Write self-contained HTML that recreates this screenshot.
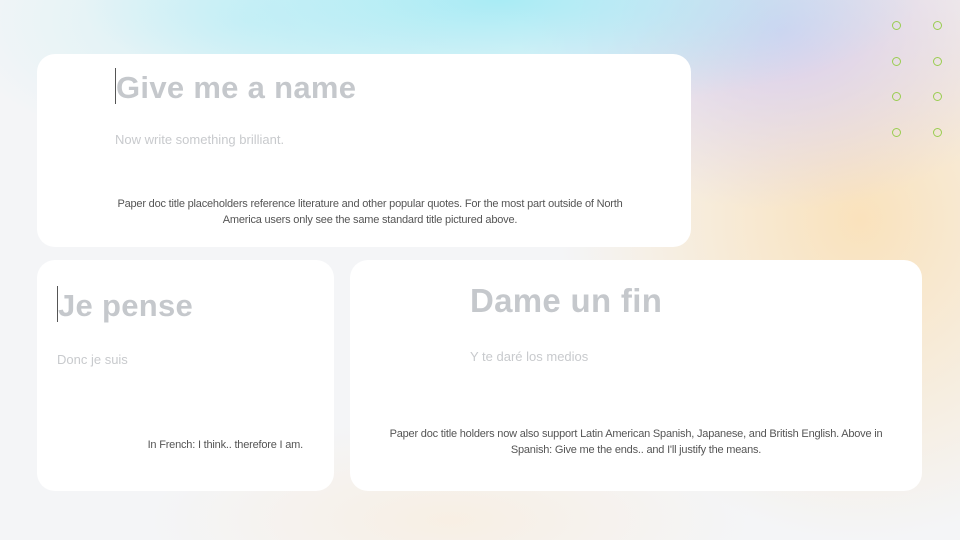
<!DOCTYPE html>
<html><head><style>
body{margin:0;width:960px;height:540px;overflow:hidden;font-family:"Liberation Sans",sans-serif;position:relative;
background:
radial-gradient(ellipse 420px 110px at 500px 0px,rgba(165,235,245,.95),transparent),
radial-gradient(ellipse 260px 180px at 780px 30px,rgba(215,205,240,.95),transparent),
radial-gradient(ellipse 300px 320px at 860px 220px,rgba(250,225,185,.95),transparent),
radial-gradient(ellipse 300px 140px at 250px 20px,rgba(205,240,245,.8),transparent),
radial-gradient(ellipse 300px 100px at 450px 520px,rgba(250,235,215,.6),transparent),
#f4f5f7;}
.card{position:absolute;background:#fff;border-radius:18px}
.t{position:absolute;font-weight:bold;color:#c5c8cc;white-space:nowrap;letter-spacing:0.3px}
.s{position:absolute;font-size:13px;color:#c8cacd;white-space:nowrap}
.c{position:absolute;font-size:11px;color:#555;text-align:center;line-height:16px;letter-spacing:-0.2px}
.cur{position:absolute;width:1px;background:#555}
.dot{position:absolute;width:7px;height:7px;border:1.3px solid #9acd50;border-radius:50%}
</style></head><body>
<div class="card" style="left:37px;top:54px;width:654px;height:193px"></div>
<div class="card" style="left:37px;top:260px;width:297px;height:231px"></div>
<div class="card" style="left:350px;top:260px;width:572px;height:231px"></div>
<div class="cur" style="left:115px;top:68px;height:36px"></div>
<div class="t" style="left:116px;top:70px;font-size:31px">Give me a name</div>
<div class="s" style="left:115px;top:132px">Now write something brilliant.</div>
<div class="c" style="left:64px;top:196px;width:612px">Paper doc title placeholders reference literature and other popular quotes. For the most part outside of North<br>America users only see the same standard title pictured above.</div>
<div class="cur" style="left:57px;top:286px;height:36px"></div>
<div class="t" style="left:58px;top:288px;font-size:31px">Je pense</div>
<div class="s" style="left:57px;top:352px">Donc je suis</div>
<div class="c" style="left:53px;top:437px;width:250px;text-align:right">In French: I think.. therefore I am.</div>
<div class="t" style="left:470px;top:282px;font-size:33px">Dame un fin</div>
<div class="s" style="left:470px;top:349px">Y te daré los medios</div>
<div class="c" style="left:355px;top:426px;width:562px">Paper doc title holders now also support Latin American Spanish, Japanese, and British English. Above in<br>Spanish: Give me the ends.. and I'll justify the means.</div>
<div class="dot" style="left:892px;top:21px"></div><div class="dot" style="left:933px;top:21px"></div>
<div class="dot" style="left:892px;top:57px"></div><div class="dot" style="left:933px;top:57px"></div>
<div class="dot" style="left:892px;top:92px"></div><div class="dot" style="left:933px;top:92px"></div>
<div class="dot" style="left:892px;top:128px"></div><div class="dot" style="left:933px;top:128px"></div>
</body></html>
